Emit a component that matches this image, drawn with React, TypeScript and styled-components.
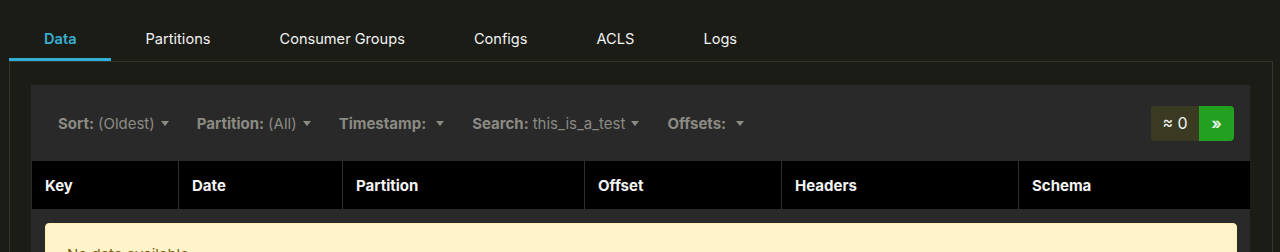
import React from 'react';
import styled, {createGlobalStyle} from 'styled-components';

const GlobalStyle = createGlobalStyle`
    html, body {
        margin: 0;
        padding: 0;
        background: #1c1c17;
        font-family: Inter, "Liberation Sans", sans-serif;
        overflow: hidden;
    }
`;

const Page = styled.div`
    padding: 20px 7px 0 9px;
    height: 252px;
    box-sizing: border-box;
    overflow: hidden;
`;

const TabBar = styled.nav`
    display: flex;
    height: 41px;
`;

const Tab = styled.div<{$active?: boolean}>`
    padding: 0 34px 0 35px;
    font-size: 14.6px;
    line-height: 38px;
    color: ${({$active}) => ($active ? '#38aed0' : '#f2f2f2')};
    font-weight: ${({$active}) => ($active ? 600 : 400)};
    border-bottom: 3px solid ${({$active}) => ($active ? '#2fb0d6' : 'transparent')};
`;

const TabPanel = styled.section`
    border: 1px solid #34342b;
    border-bottom: none;
    padding: 23px 22px 0 21px;
`;

const Card = styled.div`
    background: #29292a;
    display: flex;
    flex-direction: column;
`;

const Toolbar = styled.div`
    display: flex;
    flex-shrink: 0;
    align-items: center;
    justify-content: space-between;
    height: 76px;
    padding: 0 16px 0 27px;
`;

const Filters = styled.div`
    display: flex;
    gap: 28px;
`;

const Filter = styled.div`
    font-size: 15px;
    color: #8b8b83;
    display: flex;
    align-items: center;

    b {
        font-weight: 700;
        margin-right: 4px;
    }

    &::after {
        content: '';
        margin-left: 6px;
        border-left: 4px solid transparent;
        border-right: 4px solid transparent;
        border-top: 5px solid #8b8b83;
    }
`;

const ButtonGroup = styled.div`
    display: flex;
    height: 35px;
`;

const Counter = styled.div`
    background: #3a3a22;
    color: #f2f2f2;
    font-size: 16px;
    width: 48px;
    display: flex;
    align-items: center;
    justify-content: center;
    border-radius: 3px 0 0 3px;
`;

const NextButton = styled.button`
    background: #22a01f;
    color: #e6f5e6;
    border: none;
    width: 35px;
    font-size: 16px;
    font-weight: 700;
    border-radius: 0 4px 4px 0;
    padding: 0;
    font-family: inherit;
`;

const Table = styled.div`
    display: grid;
    flex-shrink: 0;
    grid-template-columns: 146px 164px 242px 197px 237px 1fr;
    background: #000;
    height: 48px;
    margin-left: 1px;
`;

const HeadCell = styled.div`
    color: #f4f4f4;
    font-weight: 700;
    font-size: 15px;
    display: flex;
    align-items: center;
    padding-left: 13px;
    border-left: 1px solid #2e2e2a;

    &:first-child {
        border-left: none;
    }
`;

const Body = styled.div`
    flex-shrink: 0;
    padding: 14px 13px 0 14px;
`;

const Alert = styled.div`
    background: #fff3c9;
    border: 1px solid #ffeeb5;
    border-radius: 4px;
    color: #7a5f10;
    font-size: 15px;
    padding: 21px 21px;
    height: 60px;
`;

const tabs = ['Data', 'Partitions', 'Consumer Groups', 'Configs', 'ACLS', 'Logs'];
const filters: [string, string][] = [
    ['Sort:', '(Oldest)'],
    ['Partition:', '(All)'],
    ['Timestamp:', ''],
    ['Search:', 'this_is_a_test'],
    ['Offsets:', '']
];
const columns = ['Key', 'Date', 'Partition', 'Offset', 'Headers', 'Schema'];

const App = () => (
    <Page>
        <GlobalStyle />
        <TabBar>
            {tabs.map((t, i) => (
                <Tab key={t} $active={i === 0}>{t}</Tab>
            ))}
        </TabBar>
        <TabPanel>
            <Card>
                <Toolbar>
                    <Filters>
                        {filters.map(([label, value]) => (
                            <Filter key={label}><b>{label}</b>{value}</Filter>
                        ))}
                    </Filters>
                    <ButtonGroup>
                        <Counter>≈ 0</Counter>
                        <NextButton>»</NextButton>
                    </ButtonGroup>
                </Toolbar>
                <Table>
                    {columns.map(c => <HeadCell key={c}>{c}</HeadCell>)}
                </Table>
                <Body>
                    <Alert>No data available</Alert>
                </Body>
            </Card>
        </TabPanel>
    </Page>
);

export default App;
